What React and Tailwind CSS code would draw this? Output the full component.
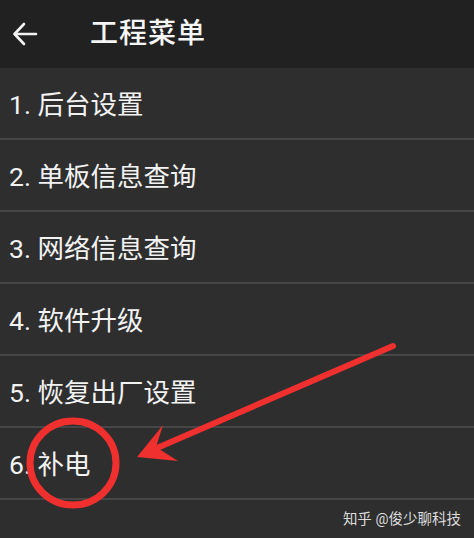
import React from "react";

const items = ["1. 后台设置", "2. 单板信息查询", "3. 网络信息查询", "4. 软件升级", "5. 恢复出厂设置", "6. 补电"];

export default function App() {
  return (
    <div
      className="relative h-[538px] w-[474px] overflow-hidden bg-[#2e2e2e] text-white"
      style={{ fontFamily: "Roboto, 'Noto Sans CJK SC', sans-serif" }}
    >
      <div className="flex h-[68px] items-center bg-[#212121]">
        <svg className="ml-[12px]" width="26" height="24" viewBox="0 0 26 24" fill="none" stroke="#f2f2f2" strokeWidth="2.6" strokeLinecap="round" strokeLinejoin="round">
          <path d="M24 12H3" />
          <path d="M12 2 2.5 12 12 22" />
        </svg>
        <h1 className="ml-[52px] text-[28px] font-medium tracking-[1px] text-[#f5f5f5]">工程菜单</h1>
      </div>
      <ul>
        {items.map((t) => (
          <li key={t} className="flex h-[72px] items-center border-b-2 border-[#464646] pl-[9px] pt-[4px] text-[26.5px] text-[#f2f2f2]">
            {t}
          </li>
        ))}
      </ul>
      <div className="flex justify-end pr-[13px] pt-[9px] text-[14.5px] text-[#dcdcdc]">知乎 @俊少聊科技</div>

      <svg className="pointer-events-none absolute left-0 top-0" width="474" height="538" viewBox="0 0 474 538">
        <line x1="393" y1="346" x2="150" y2="451" stroke="#f0302e" strokeWidth="6" strokeLinecap="round" />
        <path d="M137 457 L163 425 L156 447 L178 461 Z" fill="#f0302e" />
        <ellipse cx="73" cy="463" rx="43" ry="42" fill="none" stroke="#f0302e" strokeWidth="7" />
      </svg>
    </div>
  );
}
